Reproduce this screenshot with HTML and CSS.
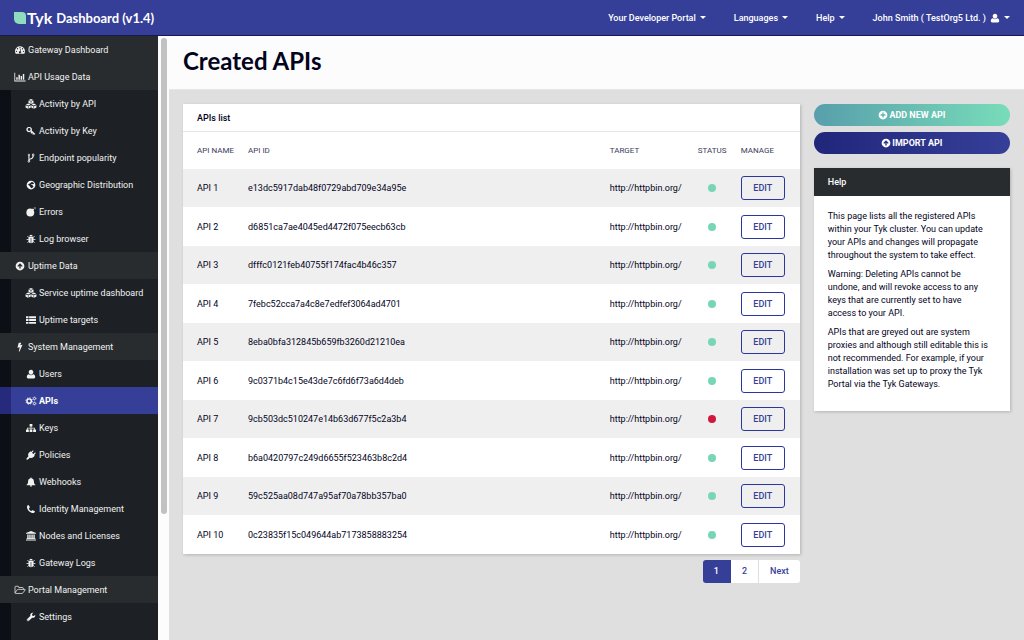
FILE: index.html
```
<!DOCTYPE html>
<html lang="en">
<head>
    <meta charset="UTF-8">
    <meta name="viewport" content="width=device-width, initial-scale=1.0">
    <title>Tyk Dashboard - Created APIs</title>
    <link rel="stylesheet" href="styles.css">
</head>
<body>

    <!-- Icon set -->
    <svg class="icon-defs" aria-hidden="true">
        <symbol id="i-gauge" viewBox="0 0 16 16"><path fill-rule="evenodd" d="M8 2a8 8 0 0 0-8 8c0 1.500.4 2.900 1.100 4h13.800A8 8 0 0 0 8 2zM8 3.200a1.100 1.100 0 1 1 0 2.200 1.100 1.100 0 0 1 0-2.200zM4 4.900A1.100 1.100 0 1 1 4 7.100 1.100 1.100 0 0 1 4 4.900zM2.400 9a1.100 1.100 0 1 1 0 2.200 1.100 1.100 0 0 1 0-2.200zM13.600 9a1.100 1.100 0 1 1 0 2.200 1.100 1.100 0 0 1 0-2.200zM12 4.900a1.100 1.100 0 1 1 0 2.200 1.100 1.100 0 0 1 0-2.200zM8.700 6.400l1 .3-.8 3.300a1.800 1.800 0 1 1-1.100-.2z"/></symbol>
        <symbol id="i-chart" viewBox="0 0 18 16"><path d="M0 1h1.300v12.700H18V15H0zM3 8.500h2.300v4H3zM6.500 4.500h2.300v8H6.500zM10 6.500h2.300v6H10zM13.500 3h2.300v9.500h-2.300z"/></symbol>
        <symbol id="i-cubes" viewBox="0 0 18 16"><path d="M9 0l3.700 1.600L9 3.200 5.300 1.600zM5 2.500l3.600 1.600v3.700L5 6.300zM13 2.500v3.800L9.400 7.800V4.100zM4.500 7.200l3.700 1.600-3.700 1.600L.8 8.800zM.3 9.800l3.800 1.600v4L.3 13.700zM8.600 9.800v3.900l-3.700 1.700v-4zM13.500 7.200l3.700 1.600-3.700 1.600-3.700-1.600zM9.400 9.800l3.700 1.600v4l-3.700-1.700zM17.700 9.800v3.900l-3.800 1.700v-4z"/></symbol>
        <symbol id="i-key" viewBox="0 0 16 16"><path fill-rule="evenodd" d="M5.300 1.500a4.200 4.200 0 0 1 3.900 5.800l5.700 5.300-1.300 1.500-1.300-1.100-1 1.100-1.400-1.300.9-1.100-.9-.8-1.400 1.400-1.400-1.300 1.200-1.700-.7-.6a4.200 4.200 0 1 1-2.300-7.200zM5 3.300a2.300 2.300 0 1 0 0 4.600 2.300 2.300 0 0 0 0-4.600z"/></symbol>
        <symbol id="i-fork" viewBox="0 0 16 16"><path fill-rule="evenodd" d="M4.700 1a1.900 1.900 0 0 1 .9 3.500v5c1.500-1 4.800-1 4.900-5A1.900 1.900 0 1 1 12.400 4.500c0 4.800-3.300 5.200-5.300 6-1 .4-1.400.7-1.400 1.200A1.900 1.900 0 1 1 3.800 11.600V4.500A1.900 1.900 0 0 1 4.700 1zM4.700 2.100a.8.800 0 1 0 0 1.600.8.800 0 0 0 0-1.600zM11.500 2.100a.8.800 0 1 0 0 1.600.8.800 0 0 0 0-1.600zM4.700 12.500a.8.800 0 1 0 0 1.600.8.800 0 0 0 0-1.600z"/></symbol>
        <symbol id="i-globe" viewBox="0 0 16 16"><path fill-rule="evenodd" d="M8 1a7 7 0 1 1 0 14A7 7 0 0 1 8 1zM9 3L7.200 4.700 4.600 6.200 3 7.500l2.300 1.200 1.600 2.500L8.700 13l3.200-2-1.200-2.500-2.700-.8 1.200-1.200 1.800.4 2-1.500C12.300 4 10.700 3 9 3z"/></symbol>
        <symbol id="i-bomb" viewBox="0 0 16 16"><path d="M7 2.500c1.200 0 2.200.3 3.100.8l1.100-1.100 1.900 1.900-1 1.200c.7 1.100 1.100 2.200 1.100 3.600A6.300 6.300 0 1 1 7 2.500z"/><path d="M12.300 3.700l1.400-1.400M13.300.3v1.400M14.300 2.800h1.500M14.300 1.700l1-1" fill="none" stroke="currentColor" stroke-width=".8"/></symbol>
        <symbol id="i-bug" viewBox="0 0 16 16"><path d="M5.200 3.800a2.800 2.800 0 0 1 5.600 0zM4 4.700h8v6.200c0 2.300-1.500 3.600-3.500 3.800V6.500h-1v8.200C5.500 14.500 4 13.200 4 10.900z"/><path d="M4.500 5.500L2.200 3.200M11.500 5.500l2.300-2.300M4.500 8.800H1M11.500 8.800H15M4.700 11.500l-2.300 2.600M11.300 11.500l2.300 2.600" fill="none" stroke="currentColor" stroke-width="1.300"/></symbol>
        <symbol id="i-up" viewBox="0 0 16 16"><path fill-rule="evenodd" d="M8 1a7 7 0 1 1 0 14A7 7 0 0 1 8 1zM8 3.500L3.700 7.800l1.500 1.500L6.900 7.700V12h2.200V7.700l1.700 1.600 1.500-1.500z"/></symbol>
        <symbol id="i-list" viewBox="0 0 16 16"><path d="M0 2h4v3H0zM5 2h11v3H5zM0 6.500h4v3H0zM5 6.500h11v3H5zM0 11h4v3H0zM5 11h11v3H5z"/></symbol>
        <symbol id="i-bolt" viewBox="0 0 16 16"><path d="M6 1h4L8.300 5.200l3.700-.9L7.200 15H6l1.600-6.800-3.700.9z"/></symbol>
        <symbol id="i-user" viewBox="0 0 16 16"><path d="M8 1c2.200 0 3.700 1.600 3.700 3.800S10.200 9 8 9 4.300 7 4.300 4.800 5.800 1 8 1zM4.600 8.500c2 1.800 4.800 1.800 6.800 0 2.300.3 3.300 2.200 3.300 4.400 0 1.300-.8 2.100-2 2.100H3.300c-1.200 0-2-.8-2-2.100 0-2.200 1-4.100 3.300-4.400z"/></symbol>
        <symbol id="i-cogs" viewBox="0 0 18 16"><g fill="none" stroke="currentColor"><circle cx="6" cy="8" r="3.500" stroke-width="2.200"/><circle cx="6" cy="8" r="5.200" stroke-width="1.300" stroke-dasharray="2 2.080"/><circle cx="14.500" cy="4" r="1.700" stroke-width="1.200"/><circle cx="14.500" cy="4" r="2.800" stroke-width=".9" stroke-dasharray="1.300 1.630"/><circle cx="14.500" cy="12" r="1.700" stroke-width="1.200"/><circle cx="14.500" cy="12" r="2.800" stroke-width=".9" stroke-dasharray="1.300 1.630"/></g></symbol>
        <symbol id="i-sitemap" viewBox="0 0 16 16"><path d="M5.800 1.500h4.400v4.200H8.600v1.700h5.600v2.800H16v4.300h-4.500v-4.300H13V8.600H8.600v1.600h1.600v4.300H5.800v-4.300h1.600V8.600H3v1.600h1.500v4.300H0v-4.300h1.800V7.400h5.600V5.700H5.800z"/></symbol>
        <symbol id="i-plug" viewBox="0 0 16 16"><path d="M10.700.8c.9-.5 1.800.4 1.200 1.300L9.600 4.500l2 2L14 4.200c.9-.6 1.800.3 1.300 1.200L13 7.800l1.200 1.200-1.100 1.100c-1.900 2.700-4.500 3.200-6.900 2.100L3 15.200l-2.200.2.200-2.300L4 10c-1.200-2.500-.7-5 2-7l1-1 1.200 1.200z"/></symbol>
        <symbol id="i-bell" viewBox="0 0 16 16"><path d="M7.200 1.300a.9.900 0 0 1 1.600 0v.8c2.700.5 3.700 2.300 3.800 4.700.1 3.200.8 4.200 2.400 5.700v.6H1v-.6c1.600-1.500 2.300-2.500 2.400-5.700.1-2.400 1.100-4.200 3.800-4.700zM6.200 13.600h3.600a1.800 1.800 0 0 1-3.600 0z"/></symbol>
        <symbol id="i-phone" viewBox="0 0 16 16"><path d="M4.300 1.800l1.900 3.500c.1.800-1.600 1.500-1.500 2.100.5 1.600 2.300 3.400 3.900 3.900.6.100 1.300-1.600 2.100-1.500l3.500 1.900c.2 1.700-1.400 2.700-3 2.700C6.500 14.400 1.600 9.500 1.600 4.800c0-1.600 1-3.200 2.700-3z"/></symbol>
        <symbol id="i-bank" viewBox="0 0 16 16"><path d="M8 0l8 3.300v1.200H0V3.300zM2 5.400h2.200v6.300h1V5.400h2.200v6.300h1.200V5.400h2.200v6.300h1V5.400H14v6.300h1v1.200H1v-1.200h1zM0 13.700h16v1.500H0z"/></symbol>
        <symbol id="i-folder" viewBox="0 0 18 16"><path fill="none" stroke="currentColor" stroke-width="1.200" stroke-linejoin="round" d="M1 12.500V3.300C1 2.500 1.500 2 2.300 2h3.400C6.500 2 7 2.500 7 3.300V4h6c.8 0 1.300.5 1.300 1.300V7M1 12.500L4.300 8c.5-.7 1-1 1.700-1h10.800c.6 0 .7.500.3 1l-3.300 4.500c-.5.700-1 1-1.700 1H2c-.7 0-1-.4-1-1z"/></symbol>
        <symbol id="i-wrench" viewBox="0 0 16 16"><path fill-rule="evenodd" d="M14.700 4.200c.8 3-1.900 5.700-4.900 4.900l-5.500 5.400c-.5.500-1.200.5-1.700 0l-1.100-1.100c-.5-.5-.5-1.200 0-1.700l5.400-5.500C6.100 3.200 8.700.5 11.800 1.300L9.600 3.500l.5 2.400 2.400.5zM3.200 12a.8.800 0 1 0 0 1.600.8.800 0 0 0 0-1.600z"/></symbol>
        <symbol id="i-plus" viewBox="0 0 16 16"><path fill-rule="evenodd" d="M8 1a7 7 0 1 1 0 14A7 7 0 0 1 8 1zM6.900 4v2.900H4v2.200h2.900V12h2.200V9.100H12V6.900H9.100V4z"/></symbol>
    </svg>

    <header class="topbar">
        <a class="brand" href="#">
            <svg class="leaf" viewBox="0 0 12 12" aria-hidden="true"><path d="M0 0h8a4 4 0 0 1 4 4v8H5a5 5 0 0 1-5-5z"/></svg>
            <span class="brand-name">Tyk</span>
            <span>Dashboard (v1.4)</span>
        </a>
        <nav class="topnav">
            <a href="#">Your Developer Portal <span class="caret"></span></a>
            <a href="#">Languages <span class="caret"></span></a>
            <a href="#">Help <span class="caret"></span></a>
            <a href="#">John Smith ( TestOrg5 Ltd. ) <svg class="icon"><use href="#i-user"/></svg> <span class="caret"></span></a>
        </nav>
    </header>

    <div class="layout">
        <aside class="sidebar">
            <nav class="menu">
                <a href="#"><svg class="icon"><use href="#i-gauge"/></svg>Gateway Dashboard</a>
                <a href="#"><svg class="icon"><use href="#i-chart"/></svg>API Usage Data</a>
                <div class="submenu">
                    <a href="#"><svg class="icon"><use href="#i-cubes"/></svg>Activity by API</a>
                    <a href="#"><svg class="icon"><use href="#i-key"/></svg>Activity by Key</a>
                    <a href="#"><svg class="icon"><use href="#i-fork"/></svg>Endpoint popularity</a>
                    <a href="#"><svg class="icon"><use href="#i-globe"/></svg>Geographic Distribution</a>
                    <a href="#"><svg class="icon"><use href="#i-bomb"/></svg>Errors</a>
                    <a href="#"><svg class="icon"><use href="#i-bug"/></svg>Log browser</a>
                </div>
                <a href="#"><svg class="icon"><use href="#i-up"/></svg>Uptime Data</a>
                <div class="submenu">
                    <a href="#"><svg class="icon"><use href="#i-cubes"/></svg>Service uptime dashboard</a>
                    <a href="#"><svg class="icon"><use href="#i-list"/></svg>Uptime targets</a>
                </div>
                <a href="#"><svg class="icon"><use href="#i-bolt"/></svg>System Management</a>
                <div class="submenu">
                    <a href="#"><svg class="icon"><use href="#i-user"/></svg>Users</a>
                    <a href="#" class="active"><svg class="icon"><use href="#i-cogs"/></svg>APIs</a>
                    <a href="#"><svg class="icon"><use href="#i-sitemap"/></svg>Keys</a>
                    <a href="#"><svg class="icon"><use href="#i-plug"/></svg>Policies</a>
                    <a href="#"><svg class="icon"><use href="#i-bell"/></svg>Webhooks</a>
                    <a href="#"><svg class="icon"><use href="#i-phone"/></svg>Identity Management</a>
                    <a href="#"><svg class="icon"><use href="#i-bank"/></svg>Nodes and Licenses</a>
                    <a href="#"><svg class="icon"><use href="#i-bug"/></svg>Gateway Logs</a>
                </div>
                <a href="#"><svg class="icon"><use href="#i-folder"/></svg>Portal Management</a>
                <div class="submenu">
                    <a href="#"><svg class="icon"><use href="#i-wrench"/></svg>Settings</a>
                </div>
            </nav>
            <div class="scroll-track"><div class="scroll-thumb"></div></div>
        </aside>

        <main class="main">
            <div class="page-title">
                <h1>Created APIs</h1>
            </div>

            <div class="content">
                <div class="list-column">
                    <section class="card">
                        <h2>APIs list</h2>
                        <table class="api-table">
                            <thead>
                                <tr>
                                    <th class="col-name">API NAME</th>
                                    <th>API ID</th>
                                    <th class="col-target">TARGET</th>
                                    <th class="col-status">STATUS</th>
                                    <th class="col-manage">MANAGE</th>
                                </tr>
                            </thead>
                            <tbody>
                                <tr><td>API 1</td><td>e13dc5917dab48f0729abd709e34a95e</td><td>http://httpbin.org/</td><td><span class="dot"></span></td><td><button>EDIT</button></td></tr>
                                <tr><td>API 2</td><td>d6851ca7ae4045ed4472f075eecb63cb</td><td>http://httpbin.org/</td><td><span class="dot"></span></td><td><button>EDIT</button></td></tr>
                                <tr><td>API 3</td><td>dfffc0121feb40755f174fac4b46c357</td><td>http://httpbin.org/</td><td><span class="dot"></span></td><td><button>EDIT</button></td></tr>
                                <tr><td>API 4</td><td>7febc52cca7a4c8e7edfef3064ad4701</td><td>http://httpbin.org/</td><td><span class="dot"></span></td><td><button>EDIT</button></td></tr>
                                <tr><td>API 5</td><td>8eba0bfa312845b659fb3260d21210ea</td><td>http://httpbin.org/</td><td><span class="dot"></span></td><td><button>EDIT</button></td></tr>
                                <tr><td>API 6</td><td>9c0371b4c15e43de7c6fd6f73a6d4deb</td><td>http://httpbin.org/</td><td><span class="dot"></span></td><td><button>EDIT</button></td></tr>
                                <tr><td>API 7</td><td>9cb503dc510247e14b63d677f5c2a3b4</td><td>http://httpbin.org/</td><td><span class="dot dot-red"></span></td><td><button>EDIT</button></td></tr>
                                <tr><td>API 8</td><td>b6a0420797c249d6655f523463b8c2d4</td><td>http://httpbin.org/</td><td><span class="dot"></span></td><td><button>EDIT</button></td></tr>
                                <tr><td>API 9</td><td>59c525aa08d747a95af70a78bb357ba0</td><td>http://httpbin.org/</td><td><span class="dot"></span></td><td><button>EDIT</button></td></tr>
                                <tr><td>API 10</td><td>0c23835f15c049644ab7173858883254</td><td>http://httpbin.org/</td><td><span class="dot"></span></td><td><button>EDIT</button></td></tr>
                            </tbody>
                        </table>
                    </section>

                    <nav class="pagination">
                        <a href="#" class="current">1</a>
                        <a href="#">2</a>
                        <a href="#">Next</a>
                    </nav>
                </div>

                <div class="side-column">
                    <button class="btn-pill btn-green"><svg class="icon"><use href="#i-plus"/></svg>ADD NEW API</button>
                    <button class="btn-pill btn-blue"><svg class="icon"><use href="#i-up"/></svg>IMPORT API</button>

                    <section class="help">
                        <h2>Help</h2>
                        <div class="help-body">
                            <p>This page lists all the registered APIs within your Tyk cluster. You can update your APIs and changes will propagate throughout the system to take effect.</p>
                            <p>Warning: Deleting APIs cannot be undone, and will revoke access to any keys that are currently set to have access to your API.</p>
                            <p>APIs that are greyed out are system proxies and although still editable this is not recommended. For example, if your installation was set up to proxy the Tyk Portal via the Tyk Gateways.</p>
                        </div>
                    </section>
                </div>
            </div>
        </main>
    </div>

</body>
</html>
```
FILE: styles.css
```
* {
    box-sizing: border-box;
}

body {
    margin: 0;
    height: 100vh;
    display: flex;
    flex-direction: column;
    font-family: Roboto, Arial, sans-serif;
    font-size: 9px;
    color: #03031c;
    background-color: #dfdfdf;
    overflow: hidden;
}

a {
    color: inherit;
    text-decoration: none;
}

button {
    font-family: inherit;
    cursor: pointer;
}

.icon-defs {
    display: none;
}

.icon {
    width: 10px;
    height: 10px;
    fill: currentColor;
    flex-shrink: 0;
}

/* Top bar */
.topbar {
    display: flex;
    flex-shrink: 0;
    justify-content: space-between;
    align-items: center;
    height: 36px;
    padding: 0 14px;
    background-color: #363f98;
    border-bottom: 1px solid #16194f;
    color: #fff;
}

.brand {
    display: flex;
    align-items: center;
    font-family: Lato, sans-serif;
    font-size: 13px;
    font-weight: bold;
}

.leaf {
    width: 12px;
    height: 12px;
    fill: #8edbbd;
    margin-right: 1px;
}

.brand-name {
    font-size: 16px;
    margin-right: 4px;
}

.topnav {
    display: flex;
    gap: 28px;
    font-weight: 500;
}

.topnav a {
    display: flex;
    align-items: center;
    gap: 4px;
}

.caret {
    border-top: 3px solid #fff;
    border-left: 3px solid transparent;
    border-right: 3px solid transparent;
}

/* Sidebar */
.layout {
    display: flex;
    flex: 1;
    min-height: 0;
}

.sidebar {
    display: flex;
    flex-shrink: 0;
    background-color: #fcfcfc;
}

.menu {
    display: flex;
    flex-direction: column;
    width: 158px;
    color: #f2f2f2;
    overflow: hidden;
}

.menu a {
    display: flex;
    flex-shrink: 0;
    align-items: center;
    height: 27px;
    padding-left: 14px;
    background-color: #282c2f;
}

.menu .icon {
    width: 12px;
    margin-right: 2px;
}

.submenu {
    background-color: #1d2125;
    border-left: 11px solid #0c1016;
}

.submenu:last-child {
    flex: 1;
}

.submenu a {
    background-color: #1d2125;
}

.submenu .active {
    margin-left: -11px;
    border-left: 11px solid #252a7d;
    background-color: #363f98;
    color: #fff;
    font-weight: bold;
}

.scroll-track {
    width: 11px;
    padding: 2px 2px 0 3px;
}

.scroll-thumb {
    height: 79%;
    border-radius: 3px;
    background-color: #c1c1c1;
}

/* Main area */
.main {
    flex: 1;
    min-width: 0;
}

.page-title {
    display: flex;
    align-items: center;
    height: 54px;
    padding: 0 14px 4px;
    background-color: #fcfcfc;
    border-bottom: 1px solid #e7e7e7;
}

.page-title h1 {
    margin: 0;
    font-family: Lato, sans-serif;
    font-size: 24px;
    font-weight: bold;
}

.content {
    display: grid;
    grid-template-columns: repeat(12, 1fr);
    gap: 14px;
    align-items: start;
    padding: 14px;
}

.list-column {
    grid-column: span 9;
}

.side-column {
    grid-column: span 3;
}

.card,
.help {
    background-color: #fff;
    box-shadow: 1px 1px 3px rgba(0, 0, 0, 0.2);
}

.card h2,
.help h2 {
    display: flex;
    align-items: center;
    height: 28px;
    margin: 0;
    padding: 0 14px;
    font-size: 9px;
    font-weight: 500;
}

.card h2 {
    border-bottom: 1px solid #e7e7e7;
}

/* API table */
.api-table {
    width: 100%;
    table-layout: fixed;
    border-spacing: 0;
}

.api-table th {
    height: 37px;
    padding: 0;
    font-size: 8px;
    font-weight: normal;
    text-align: left;
    color: #3c3c5c;
}

.api-table td {
    height: 38px;
    padding: 0;
}

.api-table th:first-child,
.api-table td:first-child {
    padding-left: 14px;
}

.api-table tbody tr:nth-child(odd) td {
    background-color: #efefef;
}

.api-table tbody tr:nth-child(even) td {
    height: 39px;
}

.col-name {
    width: 65px;
}

.col-target {
    width: 88px;
}

.col-status {
    width: 43px;
}

.col-manage {
    width: 59px;
}

.dot {
    display: block;
    width: 8px;
    height: 8px;
    margin-left: 10px;
    border-radius: 50%;
    background-color: #77d6b5;
}

.dot-red {
    background-color: #d0183f;
}

.api-table button {
    display: block;
    width: 44px;
    height: 24px;
    padding: 0;
    border: 1px solid #2c36a0;
    border-radius: 3px;
    background-color: transparent;
    color: #363f98;
    font-size: 9px;
    font-weight: 500;
}

/* Pagination */
.pagination {
    display: flex;
    justify-content: flex-end;
    margin-top: 6px;
    font-weight: 500;
    color: #363f98;
}

.pagination a {
    padding: 0 11px;
    line-height: 23px;
    background-color: #fff;
    border-right: 1px solid #dfdfdf;
}

.pagination .current {
    background-color: #363f98;
    border-color: #363f98;
    color: #fff;
    border-radius: 3px 0 0 3px;
}

.pagination a:last-child {
    border-right: none;
    border-radius: 0 3px 3px 0;
}

/* Right column */
.btn-pill {
    display: flex;
    align-items: center;
    justify-content: center;
    gap: 1px;
    width: 100%;
    height: 22px;
    margin-bottom: 6px;
    border: none;
    border-radius: 11px;
    color: #fff;
    font-size: 9px;
    font-weight: bold;
}

.btn-green {
    background: linear-gradient(to right, #589fac, #78dcb9);
}

.btn-blue {
    background: linear-gradient(to right, #20267a, #363f98);
}

.help {
    margin-top: 14px;
}

.help h2 {
    background-color: #282c2f;
    color: #fff;
}

.help-body {
    padding: 14px 20px 14px 14px;
}

.help-body p {
    margin: 0 0 6px;
    line-height: 13px;
}
```
